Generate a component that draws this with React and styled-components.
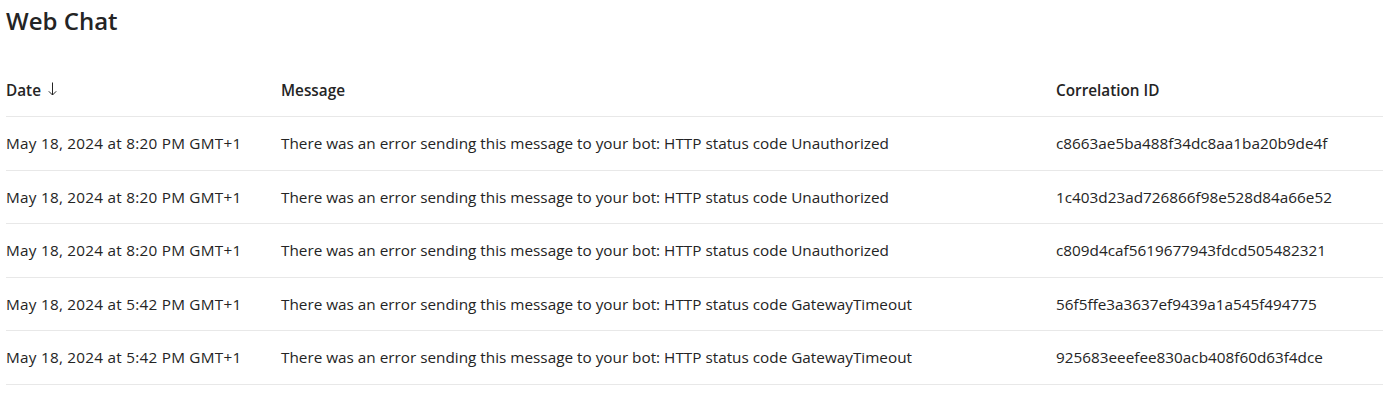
import React from 'react';
import styled, { createGlobalStyle } from 'styled-components';

const GlobalStyle = createGlobalStyle`
  body {
    margin: 0;
    background: #ffffff;
    font-family: "Open Sans", "Noto Sans", sans-serif;
    color: #242424;
  }
`;

const rows = [
  { date: 'May 18, 2024 at 8:20 PM GMT+1', code: 'Unauthorized', id: 'c8663ae5ba488f34dc8aa1ba20b9de4f' },
  { date: 'May 18, 2024 at 8:20 PM GMT+1', code: 'Unauthorized', id: '1c403d23ad726866f98e528d84a66e52' },
  { date: 'May 18, 2024 at 8:20 PM GMT+1', code: 'Unauthorized', id: 'c809d4caf5619677943fdcd505482321' },
  { date: 'May 18, 2024 at 5:42 PM GMT+1', code: 'GatewayTimeout', id: '56f5ffe3a3637ef9439a1a545f494775' },
  { date: 'May 18, 2024 at 5:42 PM GMT+1', code: 'GatewayTimeout', id: '925683eeefee830acb408f60d63f4dce' },
];

const Page = styled.div`
  padding: 4px 0 0 6px;
`;

const Title = styled.h1`
  margin: 0;
  font-size: 24px;
  font-weight: 600;
  line-height: 34px;
  height: 60px;
`;

const Table = styled.div`
  display: flex;
  flex-direction: column;
`;

const Row = styled.div`
  display: grid;
  grid-template-columns: 275px 775px 1fr;
  align-items: center;
  height: ${props => (props.head ? '53px' : '53.5px')};
  border-bottom: 1px solid #e8e8e8;
  box-sizing: border-box;
  font-size: 15.3px;
  font-weight: ${props => (props.head ? 600 : 400)};
`;

const Cell = styled.div`
  white-space: nowrap;
  display: flex;
  align-items: center;
  letter-spacing: ${props => (props.wide ? '0.25px' : 'normal')};
`;

const SortIcon = styled.svg`
  margin-left: 7px;
  margin-top: -2px;
`;

const App = () => {
  return (
    <Page>
      <GlobalStyle />
      <Title>Web Chat</Title>
      <Table>
        <Row head>
          <Cell>
            Date
            <SortIcon width="9" height="14" viewBox="0 0 9 14" fill="none" stroke="#242424" strokeWidth="1">
              <path d="M4.5 0.5 V13 M0.8 9.3 L4.5 13 L8.2 9.3" />
            </SortIcon>
          </Cell>
          <Cell>Message</Cell>
          <Cell>Correlation ID</Cell>
        </Row>
        {rows.map((item, index) => (
          <Row key={index}>
            <Cell wide>{item.date}</Cell>
            <Cell>There was an error sending this message to your bot: HTTP status code {item.code}</Cell>
            <Cell>{item.id}</Cell>
          </Row>
        ))}
      </Table>
    </Page>
  );
};

export default App;
